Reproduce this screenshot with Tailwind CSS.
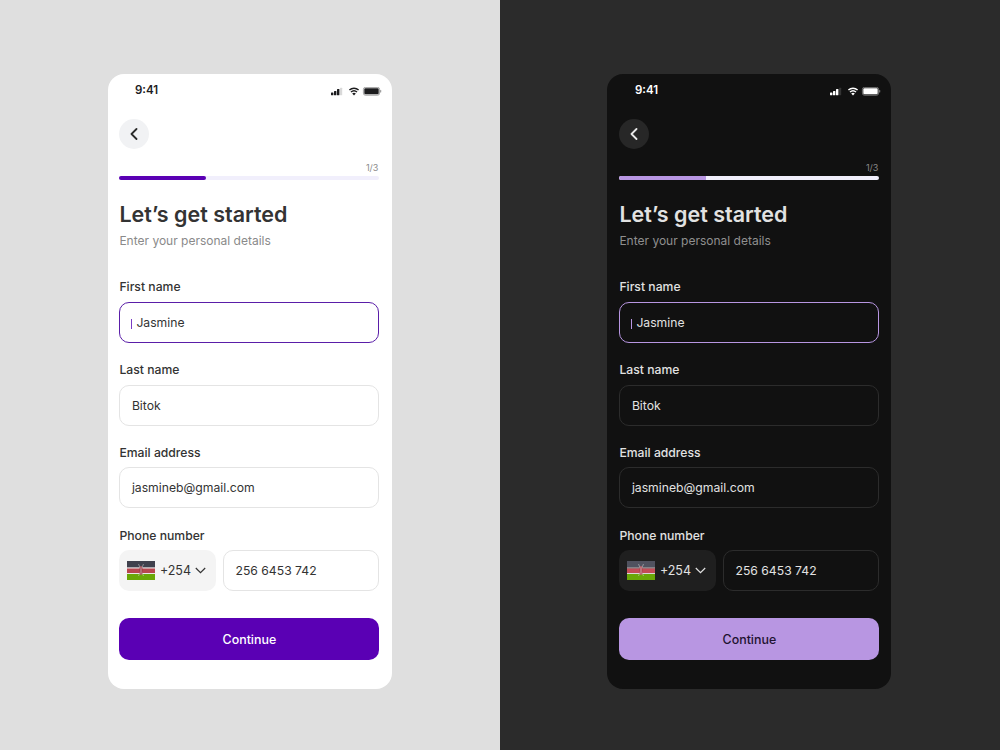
<!DOCTYPE html>
<html>
<head>
<meta charset="utf-8">
<script src="https://cdn.jsdelivr.net/npm/@tailwindcss/browser@4"></script>
</head>
<body class="font-['Inter',sans-serif]">
<div class="flex w-[1000px] h-[750px] overflow-hidden">

<!-- LIGHT -->
<div class="w-[500px] h-[750px] bg-[#dfdfdf] pt-[74px] pl-[108px]">
  <div class="w-[284px] h-[615px] bg-white rounded-[16px] pl-[11.4px] pr-[12.6px] flex flex-col">
    <div class="h-[32px] pt-[8px] flex items-start justify-between text-[#1c1c1e]">
      <span class="ml-[15.5px] text-[11.5px] leading-[16px] font-semibold">9:41</span>
      <svg class="mt-[4.5px] -mr-[2.5px]" width="51" height="9" viewBox="0 0 51 9">
        <rect x="0" y="5.5" width="2.4" height="2.8" rx=".5" fill="currentColor"/><rect x="3" y="4" width="2.4" height="4.3" rx=".5" fill="currentColor"/><rect x="6" y="2" width="2.4" height="6.3" rx=".5" fill="currentColor"/><rect x="9" y=".8" width="2.2" height="7.5" rx=".5" fill="#d9d9d9"/>
        <path d="M18.4 3a7 7 0 0 1 9.2 0M20 5a4.6 4.6 0 0 1 6 0" fill="none" stroke="currentColor" stroke-width="1.5"/><path d="M23 8.4l-1.8-1.9a2.7 2.7 0 0 1 3.6 0z" fill="currentColor"/>
        <rect x="32.4" y=".4" width="16.2" height="7.8" rx="2" fill="none" stroke="#8a8a8a" stroke-width=".8"/><rect x="33.3" y="1.3" width="14.4" height="6" rx="1.1" fill="currentColor"/><rect x="49.2" y="3" width="1" height="2.6" rx=".5" fill="#8a8a8a"/>
      </svg>
    </div>
    <div class="mt-[13px] w-[30px] h-[30px] rounded-full bg-[#f1f2f4] flex items-center justify-center text-[#2b2b2b]">
      <svg width="8" height="12" viewBox="0 0 8 12" fill="none"><path d="M6.5 1 1.5 6l5 5" stroke="currentColor" stroke-width="1.8" stroke-linecap="round" stroke-linejoin="round"/></svg>
    </div>
    <div class="mt-[13px] text-right text-[9px] leading-[12px] text-[#8a8a8a] pr-[1px]">1/3</div>
    <div class="mt-[2px] h-[4px] rounded-full bg-[#f1effc] w-[260px]"><div class="h-[4px] w-[87px] rounded-full bg-[#5a00b4]"></div></div>
    <h1 class="mt-[20px] text-[21.5px] leading-[28px] font-semibold text-[#333333]">Let’s get started</h1>
    <p class="mt-[3px] text-[12px] leading-[20px] text-[#8a8a8a]">Enter your personal details</p>

    <div class="mt-[27px] text-[12.2px] leading-[18px] font-medium text-[#333333]">First name</div>
    <div class="mt-[6px] h-[41px] pt-[2px] rounded-[10px] border-[1.5px] border-[#5a1ea8] flex items-center px-[11px] text-[12.2px] text-[#333333]"><span class="w-px h-[10px] bg-[#7a3cc4] mr-[4px]"></span>Jasmine</div>

    <div class="mt-[18px] text-[12.2px] leading-[18px] font-medium text-[#333333]">Last name</div>
    <div class="mt-[6px] h-[41px] pt-[2px] rounded-[10px] border border-[#e4e4e4] flex items-center px-[11.5px] text-[12.2px] text-[#333333]">Bitok</div>

    <div class="mt-[18px] text-[12.2px] leading-[18px] font-medium text-[#333333]">Email address</div>
    <div class="mt-[5px] h-[41px] pt-[2px] rounded-[10px] border border-[#e4e4e4] flex items-center px-[11.5px] text-[12.2px] text-[#333333]">jasmineb@gmail.com</div>

    <div class="mt-[19px] text-[12.2px] leading-[18px] font-medium text-[#333333]">Phone number</div>
    <div class="mt-[5px] flex gap-[6.6px]">
      <div class="w-[97px] h-[41px] rounded-[10px] bg-[#f4f4f4] flex items-center pl-[7.5px] text-[12.5px] text-[#333333]">
        <svg width="28" height="19" viewBox="0 0 28 19" class="shrink-0"><rect width="28" height="6.6" fill="#3f414d"/><rect y="6.6" width="28" height=".9" fill="#e8e8e8"/><rect y="7.5" width="28" height="4.6" fill="#b8474f"/><rect y="12.1" width="28" height=".9" fill="#e8e8e8"/><rect y="13" width="28" height="6" fill="#6aa707"/><path d="M11.5 3l5 12M16.5 3l-5 12" stroke="#d8d8d8" stroke-width=".5"/><ellipse cx="14" cy="9.5" rx="1.6" ry="4.6" fill="#9c3a44"/><path d="M14 5.5v8" stroke="#e8e8e8" stroke-width=".6"/></svg>
        <span class="ml-[5px] pt-[2px]">+254</span>
        <svg class="ml-[3.5px]" width="11" height="7" viewBox="0 0 11 7" fill="none"><path d="M.8 1l4.7 4.6L10.2 1" stroke="currentColor" stroke-width="1.2"/></svg>
      </div>
      <div class="flex-1 h-[41px] pt-[2px] rounded-[10px] border border-[#e4e4e4] flex items-center px-[11.5px] text-[12.2px] text-[#333333]">256 6453 742</div>
    </div>
    <div class="mt-[27px] h-[42px] pt-[3px] rounded-[10px] bg-[#5a00b4] flex items-center justify-center text-[12.4px] font-medium text-white">Continue</div>
  </div>
</div>

<!-- DARK -->
<div class="w-[500px] h-[750px] bg-[#2b2b2b] pt-[74px] pl-[107px]">
  <div class="w-[284px] h-[615px] bg-[#111111] rounded-[16px] pl-[12.4px] pr-[11.6px] flex flex-col">
    <div class="h-[32px] pt-[8px] flex items-start justify-between text-white">
      <span class="ml-[15.5px] text-[11.5px] leading-[16px] font-semibold">9:41</span>
      <svg class="mt-[4.5px] -mr-[2px]" width="51" height="9" viewBox="0 0 51 9">
        <rect x="0" y="5.5" width="2.4" height="2.8" rx=".5" fill="currentColor"/><rect x="3" y="4" width="2.4" height="4.3" rx=".5" fill="currentColor"/><rect x="6" y="2" width="2.4" height="6.3" rx=".5" fill="currentColor"/><rect x="9" y=".8" width="2.2" height="7.5" rx=".5" fill="#333333"/>
        <path d="M18.4 3a7 7 0 0 1 9.2 0M20 5a4.6 4.6 0 0 1 6 0" fill="none" stroke="currentColor" stroke-width="1.5"/><path d="M23 8.4l-1.8-1.9a2.7 2.7 0 0 1 3.6 0z" fill="currentColor"/>
        <rect x="32.4" y=".4" width="16.2" height="7.8" rx="2" fill="none" stroke="#8a8a8a" stroke-width=".8"/><rect x="33.3" y="1.3" width="14.4" height="6" rx="1.1" fill="currentColor"/><rect x="49.2" y="3" width="1" height="2.6" rx=".5" fill="#8a8a8a"/>
      </svg>
    </div>
    <div class="mt-[13px] w-[30px] h-[30px] rounded-full bg-[#272727] flex items-center justify-center text-[#e8e8e8]">
      <svg width="8" height="12" viewBox="0 0 8 12" fill="none"><path d="M6.5 1 1.5 6l5 5" stroke="currentColor" stroke-width="1.8" stroke-linecap="round" stroke-linejoin="round"/></svg>
    </div>
    <div class="mt-[13px] text-right text-[9px] leading-[12px] text-[#8a8a8a] pr-[1px]">1/3</div>
    <div class="mt-[2px] h-[4px] rounded-full bg-[#f1effc] w-[260px]"><div class="h-[4px] w-[87px] rounded-l-full bg-[#b896e2]"></div></div>
    <h1 class="mt-[20px] text-[21.5px] leading-[28px] font-semibold text-[#e2e2e2]">Let’s get started</h1>
    <p class="mt-[3px] text-[12px] leading-[20px] text-[#8f8f8f]">Enter your personal details</p>

    <div class="mt-[27px] text-[12.2px] leading-[18px] font-medium text-[#e2e2e2]">First name</div>
    <div class="mt-[6px] h-[41px] pt-[2px] rounded-[10px] border-[1.5px] border-[#b896e2] flex items-center px-[11px] text-[12.2px] text-[#e2e2e2]"><span class="w-px h-[10px] bg-[#b896e2] mr-[4px]"></span>Jasmine</div>

    <div class="mt-[18px] text-[12.2px] leading-[18px] font-medium text-[#e2e2e2]">Last name</div>
    <div class="mt-[6px] h-[41px] pt-[2px] rounded-[10px] border border-[#2c2c2c] flex items-center px-[11.5px] text-[12.2px] text-[#e2e2e2]">Bitok</div>

    <div class="mt-[18px] text-[12.2px] leading-[18px] font-medium text-[#e2e2e2]">Email address</div>
    <div class="mt-[5px] h-[41px] pt-[2px] rounded-[10px] border border-[#2c2c2c] flex items-center px-[11.5px] text-[12.2px] text-[#e2e2e2]">jasmineb@gmail.com</div>

    <div class="mt-[19px] text-[12.2px] leading-[18px] font-medium text-[#e2e2e2]">Phone number</div>
    <div class="mt-[5px] flex gap-[6.6px]">
      <div class="w-[97px] h-[41px] rounded-[10px] bg-[#1f1f1f] flex items-center pl-[7.5px] text-[12.5px] text-[#e2e2e2]">
        <svg width="28" height="19" viewBox="0 0 28 19" class="shrink-0"><rect width="28" height="6.6" fill="#50525f"/><rect y="6.6" width="28" height=".9" fill="#eeeeee"/><rect y="7.5" width="28" height="4.6" fill="#c44c57"/><rect y="12.1" width="28" height=".9" fill="#eeeeee"/><rect y="13" width="28" height="6" fill="#6aa707"/><path d="M11.5 3l5 12M16.5 3l-5 12" stroke="#d8d8d8" stroke-width=".5"/><ellipse cx="14" cy="9.5" rx="1.6" ry="4.6" fill="#a8404b"/><path d="M14 5.5v8" stroke="#eeeeee" stroke-width=".6"/></svg>
        <span class="ml-[5px] pt-[2px]">+254</span>
        <svg class="ml-[3.5px]" width="11" height="7" viewBox="0 0 11 7" fill="none"><path d="M.8 1l4.7 4.6L10.2 1" stroke="currentColor" stroke-width="1.2"/></svg>
      </div>
      <div class="flex-1 h-[41px] pt-[2px] rounded-[10px] border border-[#2c2c2c] flex items-center px-[11.5px] text-[12.2px] text-[#e2e2e2]">256 6453 742</div>
    </div>
    <div class="mt-[27px] h-[42px] pt-[3px] rounded-[10px] bg-[#b896e2] flex items-center justify-center text-[12.4px] font-medium text-[#1e1230]">Continue</div>
  </div>
</div>

</div>
</body>
</html>
